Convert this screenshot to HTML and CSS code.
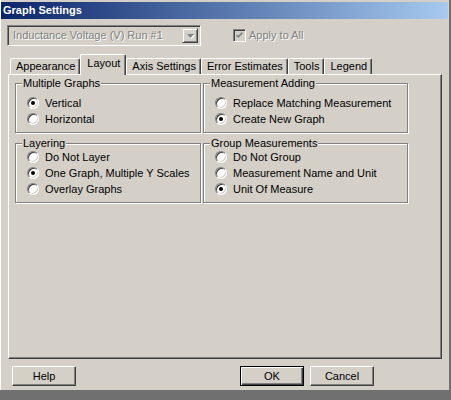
FILE: index.html
```html
<!DOCTYPE html>
<html lang="en">
	<head>
		<meta charset="utf-8">
		<title>Graph Settings</title>
		<link rel="stylesheet" href="styles.css">
	</head>
	<body>
		<div class="window">
			<div class="titlebar">Graph Settings</div>

			<div class="toprow">
				<div class="combo">
					<span class="combo-text">Inductance Voltage (V) Run #1</span>
					<span class="combo-btn">
						<svg width="7" height="4" viewBox="0 0 7 4"><path d="M0 0h7L3.5 4z" fill="#808080"/></svg>
					</span>
				</div>
				<label class="check">
					<span class="checkbox">
						<svg width="11" height="11" viewBox="0 0 11 11"><path d="M2 5 L4 7 L9 2" stroke="#808080" stroke-width="2" fill="none"/></svg>
					</span>
					<span class="check-label">Apply to All</span>
				</label>
			</div>

			<div class="tabs">
				<div class="tab">Appearance</div>
				<div class="tab active">Layout</div>
				<div class="tab">Axis Settings</div>
				<div class="tab">Error Estimates</div>
				<div class="tab">Tools</div>
				<div class="tab">Legend</div>
			</div>

			<div class="panel">
				<div class="groups">
					<div class="group">
						<div class="group-title">Multiple Graphs</div>
						<div class="options">
							<div class="option"><span class="radio checked"></span>Vertical</div>
							<div class="option"><span class="radio"></span>Horizontal</div>
						</div>
					</div>
					<div class="group">
						<div class="group-title">Measurement Adding</div>
						<div class="options">
							<div class="option"><span class="radio"></span>Replace Matching Measurement</div>
							<div class="option"><span class="radio checked"></span>Create New Graph</div>
						</div>
					</div>
					<div class="group">
						<div class="group-title">Layering</div>
						<div class="options tight">
							<div class="option"><span class="radio"></span>Do Not Layer</div>
							<div class="option"><span class="radio checked"></span>One Graph, Multiple Y Scales</div>
							<div class="option"><span class="radio"></span>Overlay Graphs</div>
						</div>
					</div>
					<div class="group">
						<div class="group-title">Group Measurements</div>
						<div class="options tight">
							<div class="option"><span class="radio"></span>Do Not Group</div>
							<div class="option"><span class="radio"></span>Measurement Name and Unit</div>
							<div class="option"><span class="radio checked"></span>Unit Of Measure</div>
						</div>
					</div>
				</div>
			</div>

			<div class="buttons">
				<button class="btn">Help</button>
				<div class="btn-group">
					<button class="btn default">OK</button>
					<button class="btn">Cancel</button>
				</div>
			</div>
		</div>
	</body>
</html>
```

FILE: styles.css
```css
html, body {
	margin: 0;
	padding: 0;
}

body {
	background-color: #707070;
	color: #000000;
	font-family: "Liberation Sans", Arial, sans-serif;
	font-size: 11px;
	line-height: 13px;
}

.window {
	width: 449px;
	height: 390px;
	box-sizing: border-box;
	padding-top: 2px;
	background-color: #D4D0C8;
	border-left: 1px solid #FFFFFF;
	border-right: 1px solid #D4D0C8;
}

.titlebar {
	height: 17px;
	padding-left: 2px;
	background: linear-gradient(to right, #0A246A, #A6CAF0);
	color: #FFFFFF;
	font-weight: bold;
	line-height: 17px;
}

.toprow {
	display: flex;
	align-items: center;
	margin-top: 6px;
	padding-left: 6px;
}

.combo {
	display: flex;
	width: 194px;
	height: 21px;
	box-sizing: border-box;
	border: 1px solid;
	border-color: #808080 #FFFFFF #FFFFFF #808080;
	box-shadow: inset 1px 1px 0 #404040, inset -1px -1px 0 #D4D0C8;
	padding: 2px;
}

.combo-text {
	flex: 1;
	padding-left: 3px;
	line-height: 15px;
	color: #808080;
	text-shadow: 1px 1px 0 #FFFFFF;
}

.combo-btn {
	display: flex;
	align-items: center;
	justify-content: center;
	width: 16px;
	height: 15px;
	box-sizing: border-box;
	border: 1px solid;
	border-color: #D4D0C8 #404040 #404040 #D4D0C8;
	box-shadow: inset 1px 1px 0 #FFFFFF, inset -1px -1px 0 #808080;
}

.combo-btn svg {
	filter: drop-shadow(1px 1px 0 #FFFFFF);
}

.check {
	display: flex;
	align-items: center;
	margin-left: 32px;
	color: #808080;
	text-shadow: 1px 1px 0 #FFFFFF;
}

.checkbox {
	display: flex;
	width: 13px;
	height: 13px;
	box-sizing: border-box;
	border: 1px solid;
	border-color: #808080 #FFFFFF #FFFFFF #808080;
	box-shadow: inset 1px 1px 0 #404040, inset -1px -1px 0 #D4D0C8;
	padding: 1px 0 0 1px;
}

.checkbox svg {
	width: 9px;
	height: 9px;
}

.check-label {
	margin-left: 3px;
}

/* tab strip */
.tabs {
	display: flex;
	align-items: flex-end;
	height: 21px;
	margin-top: 7px;
	padding-left: 9px;
}

.tab {
	position: relative;
	height: 16px;
	box-sizing: border-box;
	padding: 1px 4px 0 5px;
	border: 1px solid #FFFFFF;
	border-right-color: #404040;
	border-bottom: none;
	border-radius: 2px 2px 0 0;
	box-shadow: inset -1px 0 0 #808080;
	white-space: nowrap;
}

.tab.active {
	z-index: 1;
	height: 21px;
	margin: 0 0 -1px;
	padding: 2px 5px 0 6px;
	background-color: #D4D0C8;
}

.panel {
	width: 434px;
	height: 285px;
	box-sizing: border-box;
	margin-left: 7px;
	padding: 8px 0 0 6px;
	border: 1px solid;
	border-color: #FFFFFF #404040 #404040 #FFFFFF;
	box-shadow: inset -1px -1px 0 #808080;
}

.groups {
	display: grid;
	grid-template-columns: 186px 205px;
	grid-template-rows: 50px 60px;
	column-gap: 2px;
	row-gap: 10px;
}

.group {
	box-sizing: border-box;
	padding-left: 11px;
	border: 1px solid #808080;
	box-shadow: inset 1px 1px 0 #FFFFFF, 1px 1px 0 #FFFFFF;
}

.group-title {
	display: table;
	margin: -7px 0 0 -5px;
	padding: 0 1px;
	background-color: #D4D0C8;
}

.options {
	margin-top: 5px;
}

.options.tight {
	margin-top: -1px;
}

.option {
	display: flex;
	align-items: center;
	height: 16px;
	white-space: nowrap;
}

.radio {
	position: relative;
	width: 12px;
	height: 12px;
	box-sizing: border-box;
	margin-right: 6px;
	border: 1px solid;
	border-color: #808080 #FFFFFF #FFFFFF #808080;
	border-radius: 50%;
	background-color: #FFFFFF;
	box-shadow: inset 1px 1px 0 #404040, inset -1px -1px 0 #D4D0C8;
}

.radio.checked::after {
	content: "";
	position: absolute;
	left: 3px;
	top: 3px;
	width: 4px;
	height: 4px;
	border-radius: 50%;
	background-color: #000000;
}

.buttons {
	display: flex;
	justify-content: space-between;
	width: 362px;
	margin: 7px 0 0 11px;
}

.btn-group {
	display: flex;
	gap: 6px;
}

.btn {
	width: 64px;
	height: 20px;
	box-sizing: border-box;
	padding: 0;
	border: 1px solid;
	border-color: #FFFFFF #404040 #404040 #FFFFFF;
	background-color: #D4D0C8;
	box-shadow: inset -1px -1px 0 #808080;
	color: #000000;
	font-family: inherit;
	font-size: 11px;
}

.btn.default {
	border: 1px solid #000000;
	box-shadow: inset 1px 1px 0 #FFFFFF, inset -1px -1px 0 #404040, inset -2px -2px 0 #808080;
}
```
